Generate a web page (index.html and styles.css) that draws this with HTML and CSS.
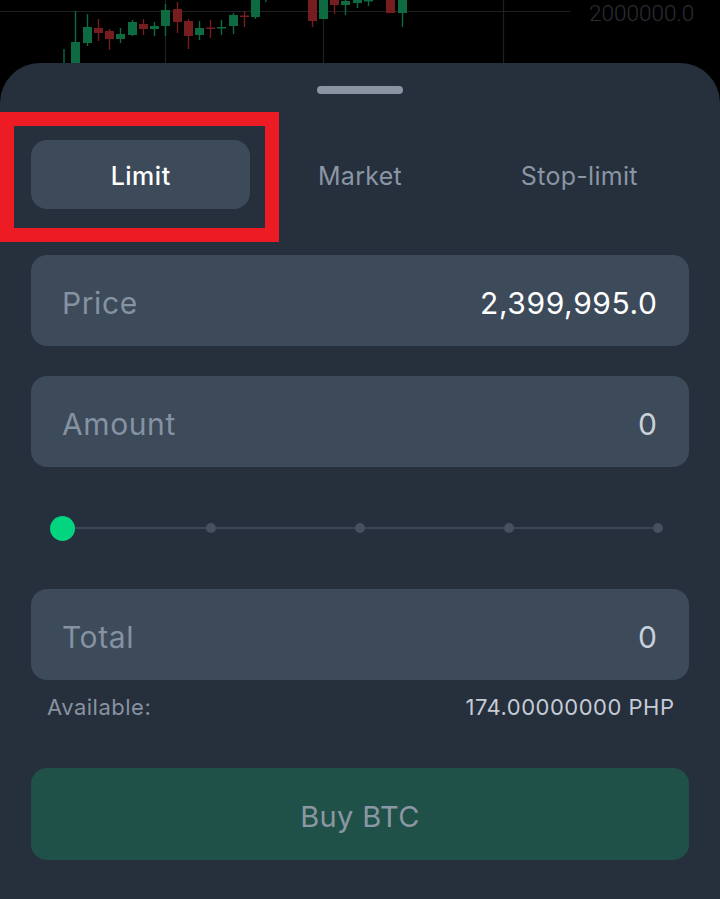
FILE: index.html
```html
<!DOCTYPE html>
<html>
<head>
<meta charset="utf-8">
<link rel="stylesheet" href="styles.css">
</head>
<body>
<div class="chart">
  <svg width="720" height="63" viewBox="0 0 720 63">
    <g stroke="#1d2025" stroke-width="1.2">
      <line x1="0" y1="11.5" x2="570" y2="11.5"/>
      <line x1="165.5" y1="0" x2="165.5" y2="63"/>
      <line x1="323.5" y1="0" x2="323.5" y2="63"/>
      <line x1="503.5" y1="0" x2="503.5" y2="63"/>
    </g>
    <text x="589" y="20.5" class="axis">2000000.0</text>
    <g class="g">
      <line x1="64" y1="49" x2="64" y2="63"/>
      <line x1="75.5" y1="11" x2="75.5" y2="63"/><rect x="71" y="42" width="9" height="21"/>
      <line x1="87.5" y1="14" x2="87.5" y2="46"/><rect x="83" y="27" width="9" height="16"/>
      <line x1="120.5" y1="28" x2="120.5" y2="43"/><rect x="116" y="34" width="9" height="5"/>
      <line x1="132.5" y1="20" x2="132.5" y2="36"/><rect x="128" y="22" width="9" height="13"/>
      <line x1="154.5" y1="22" x2="154.5" y2="36"/><rect x="150" y="26" width="9" height="3"/>
      <line x1="165.5" y1="4" x2="165.5" y2="36"/><rect x="161" y="10" width="9" height="16"/>
      <line x1="199.5" y1="21" x2="199.5" y2="40"/><rect x="195" y="28" width="9" height="7"/>
      <line x1="221.5" y1="20" x2="221.5" y2="35"/><rect x="217" y="27" width="9" height="1.5"/>
      <line x1="233.5" y1="13" x2="233.5" y2="34"/><rect x="229" y="15" width="9" height="11"/>
      <line x1="255.5" y1="0" x2="255.5" y2="19"/><rect x="251" y="0" width="9" height="17"/>
      <line x1="266" y1="0" x2="266" y2="2"/>
      <rect x="319" y="0" width="9" height="19"/>
      <line x1="345.5" y1="0" x2="345.5" y2="15"/><rect x="341" y="1" width="9" height="4"/>
      <line x1="357.5" y1="0" x2="357.5" y2="8"/><rect x="353" y="0" width="9" height="3"/>
      <line x1="368.5" y1="0" x2="368.5" y2="6"/><rect x="364" y="0" width="9" height="1.5"/>
      <line x1="402.5" y1="0" x2="402.5" y2="27"/><rect x="398" y="0" width="9" height="13"/>
    </g>
    <g class="r">
      <line x1="98.5" y1="19" x2="98.5" y2="41"/><rect x="94" y="28" width="9" height="5"/>
      <line x1="109.5" y1="29" x2="109.5" y2="50"/><rect x="105" y="31" width="9" height="8"/>
      <line x1="143.5" y1="19" x2="143.5" y2="35"/><rect x="139" y="24" width="9" height="5"/>
      <line x1="177.5" y1="2" x2="177.5" y2="33"/><rect x="173" y="9" width="9" height="13"/>
      <line x1="188.5" y1="19" x2="188.5" y2="49"/><rect x="184" y="21" width="9" height="15"/>
      <line x1="210.5" y1="20" x2="210.5" y2="38"/><rect x="206" y="27.5" width="9" height="1.5"/>
      <line x1="244.5" y1="11" x2="244.5" y2="27"/><rect x="240" y="15.5" width="9" height="1.5"/>
      <line x1="312.5" y1="0" x2="312.5" y2="27"/><rect x="308" y="0" width="9" height="21"/>
      <line x1="334.5" y1="0" x2="334.5" y2="14"/><rect x="330" y="0" width="9" height="5"/>
      <rect x="386" y="0" width="9" height="13"/>
    </g>
  </svg>
</div>
<div class="sheet">
  <div class="handle"></div>
  <div class="tabs">
    <div class="tab active">Limit</div>
    <div class="tab">Market</div>
    <div class="tab">Stop-limit</div>
  </div>
  <div class="field first">
    <span class="label">Price</span>
    <span class="value white">2,399,995.0</span>
  </div>
  <div class="field">
    <span class="label">Amount</span>
    <span class="value">0</span>
  </div>
  <div class="slider">
    <div class="track">
      <span class="stop"><span class="dot on"></span></span>
      <span class="stop"><span class="dot"></span></span>
      <span class="stop"><span class="dot"></span></span>
      <span class="stop"><span class="dot"></span></span>
      <span class="stop"><span class="dot"></span></span>
    </div>
  </div>
  <div class="field">
    <span class="label">Total</span>
    <span class="value">0</span>
  </div>
  <div class="avail">
    <span class="avail-label">Available:</span>
    <span class="avail-amt">174.00000000 PHP</span>
  </div>
  <button class="buy">Buy BTC</button>
  <div class="highlight"></div>
</div>
</body>
</html>
```
FILE: styles.css
```css
html, body {
  margin: 0;
  padding: 0;
  background: #000;
  font-family: Inter, "Noto Sans", sans-serif;
}

.chart {
  height: 63px;
  overflow: hidden;
}

.chart svg {
  display: block;
}

.axis {
  font-family: Roboto, sans-serif;
  font-weight: 300;
  font-size: 22.5px;
  fill: #2a2e34;
}

.g line, .r line {
  stroke-width: 1.4;
}

.g line { stroke: #0d6a41; }
.g rect { fill: #0d6a41; }
.r line { stroke: #761d1f; }
.r rect { fill: #761d1f; }

.sheet {
  position: relative;
  box-sizing: border-box;
  min-height: 836px;
  background: #262f3c;
  border-radius: 40px 40px 0 0;
  padding: 23px 31px 0;
}

.handle {
  width: 86px;
  height: 8px;
  border-radius: 4px;
  background: #8a94a2;
  margin: 0 auto;
}

.tabs {
  display: grid;
  grid-template-columns: repeat(3, 1fr);
  margin-top: 46px;
  height: 69px;
}

.tab {
  display: flex;
  align-items: center;
  justify-content: center;
  padding-top: 2px;
  font-size: 25px;
  letter-spacing: 0.3px;
  color: #8a96a5;
  border-radius: 16px;
}

.tab.active {
  background: #3d4a5a;
  color: #fff;
  font-weight: 500;
  letter-spacing: 0.5px;
}

.field {
  box-sizing: border-box;
  height: 91px;
  margin-top: 30px;
  background: #3d4a5a;
  border-radius: 16px;
  display: flex;
  align-items: center;
  justify-content: space-between;
  padding: 4px 32px 0 31px;
  font-size: 30px;
  letter-spacing: 0.6px;
}

.field.first {
  margin-top: 46px;
}

.slider + .field {
  margin-top: 0;
}

.label {
  color: #8592a2;
}

.value {
  color: #c8d0da;
  margin-right: -0.6px;
}

.value.white {
  color: #fff;
}

.slider {
  height: 122px;
  display: flex;
  align-items: center;
  padding: 0 31px;
}

.track {
  position: relative;
  flex: 1;
  height: 25px;
  display: flex;
  align-items: center;
  justify-content: space-between;
}

.track::before {
  content: "";
  position: absolute;
  left: 0;
  right: 0;
  top: 50%;
  height: 2px;
  margin-top: -1px;
  background: #3b4656;
}

.stop {
  width: 0;
  display: flex;
  justify-content: center;
  position: relative;
  z-index: 1;
}

.dot {
  flex-shrink: 0;
  width: 10px;
  height: 10px;
  border-radius: 50%;
  background: #46515f;
}

.dot.on {
  width: 25px;
  height: 25px;
  background: #03d47f;
}

.avail {
  height: 54px;
  display: flex;
  align-items: center;
  justify-content: space-between;
  padding: 0 15px 0 16px;
  font-size: 22px;
  letter-spacing: 0.5px;
}

.avail-label {
  color: #8792a0;
}

.avail-amt {
  color: #c5ccd6;
  margin-right: -0.5px;
}

.buy {
  display: block;
  width: 100%;
  height: 92px;
  margin-top: 34px;
  border: none;
  border-radius: 16px;
  background: #1f5149;
  color: #8b97a3;
  font-family: Inter, "Noto Sans", sans-serif;
  font-size: 29px;
  letter-spacing: 0.4px;
  padding: 4px 0 0;
}

.highlight {
  position: absolute;
  left: 0;
  top: 49px;
  width: 279px;
  height: 130px;
  box-sizing: border-box;
  border: 14px solid #ed1c24;
}
```
